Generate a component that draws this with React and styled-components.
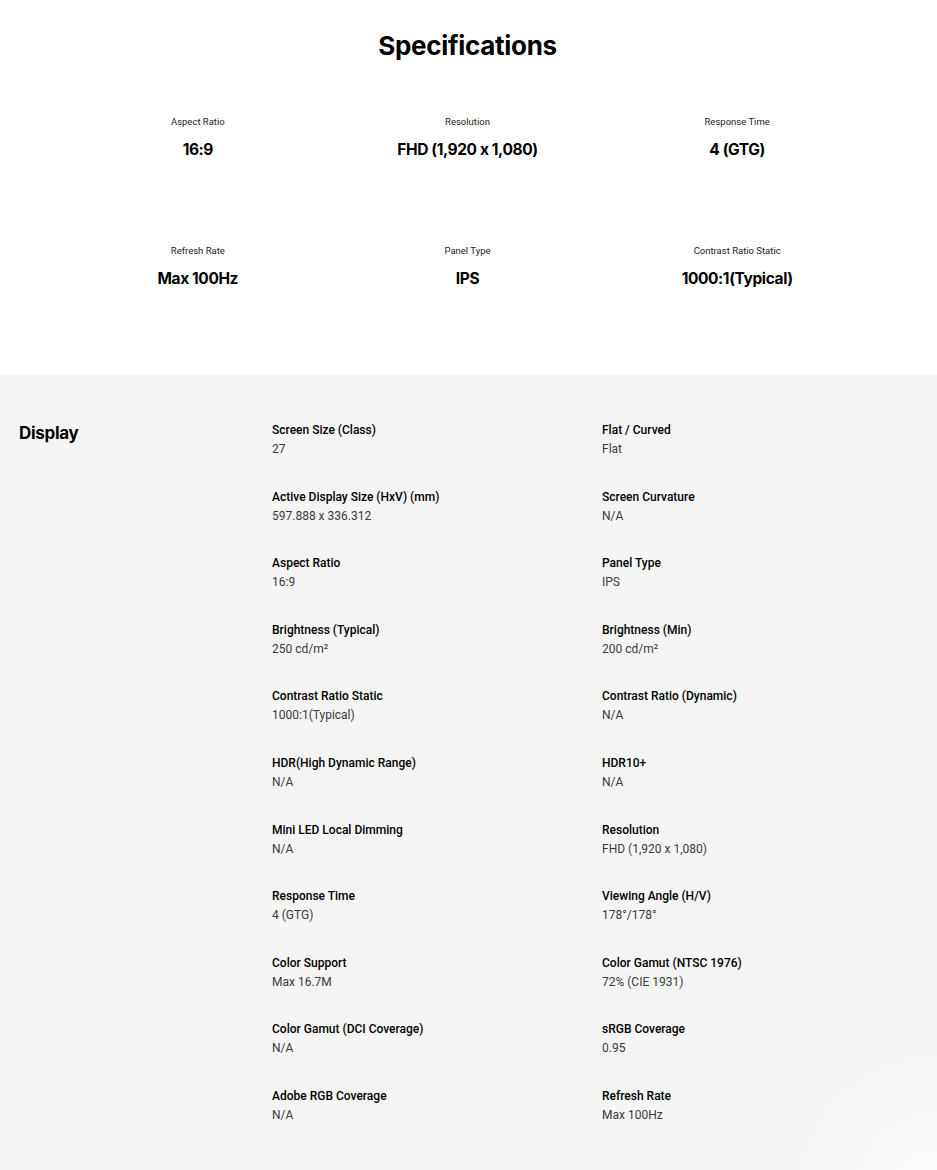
import React from "react";
import styled, { createGlobalStyle } from "styled-components";

const GlobalStyle = createGlobalStyle`
  html, body {
    margin: 0;
    padding: 0;
    background: #ffffff;
  }
  * {
    box-sizing: border-box;
  }
`;

const highlights = [
  { label: "Aspect Ratio", value: "16:9" },
  { label: "Resolution", value: "FHD (1,920 x 1,080)" },
  { label: "Response Time", value: "4 (GTG)" },
  { label: "Refresh Rate", value: "Max 100Hz" },
  { label: "Panel Type", value: "IPS" },
  { label: "Contrast Ratio Static", value: "1000:1(Typical)" },
];

const specs = [
  ["Screen Size (Class)", "27"],
  ["Flat / Curved", "Flat"],
  ["Active Display Size (HxV) (mm)", "597.888 x 336.312"],
  ["Screen Curvature", "N/A"],
  ["Aspect Ratio", "16:9"],
  ["Panel Type", "IPS"],
  ["Brightness (Typical)", "250 cd/m²"],
  ["Brightness (Min)", "200 cd/m²"],
  ["Contrast Ratio Static", "1000:1(Typical)"],
  ["Contrast Ratio (Dynamic)", "N/A"],
  ["HDR(High Dynamic Range)", "N/A"],
  ["HDR10+", "N/A"],
  ["Mini LED Local Dimming", "N/A"],
  ["Resolution", "FHD (1,920 x 1,080)"],
  ["Response Time", "4 (GTG)"],
  ["Viewing Angle (H/V)", "178°/178°"],
  ["Color Support", "Max 16.7M"],
  ["Color Gamut (NTSC 1976)", "72% (CIE 1931)"],
  ["Color Gamut (DCI Coverage)", "N/A"],
  ["sRGB Coverage", "0.95"],
  ["Adobe RGB Coverage", "N/A"],
  ["Refresh Rate", "Max 100Hz"],
];

const Page = styled.div`
  width: 937px;
  min-height: 1170px;
  display: flex;
  flex-direction: column;
  background: #ffffff;
`;

const Top = styled.section`
  padding: 30px 65px 0 63px;
  height: 375px;
`;

const Title = styled.h1`
  margin: 0;
  text-align: center;
  font-family: Inter, "Noto Sans", sans-serif;
  font-size: 26px;
  line-height: 32px;
  font-weight: 700;
  letter-spacing: -0.3px;
  color: #000000;
`;

const HighlightGrid = styled.div`
  margin-top: 53px;
  display: grid;
  grid-template-columns: repeat(3, 1fr);
  row-gap: 84px;
`;

const Highlight = styled.div`
  display: flex;
  flex-direction: column;
  align-items: center;
`;

const HighlightLabel = styled.span`
  font-family: Roboto, "Noto Sans", sans-serif;
  font-size: 9.5px;
  line-height: 14px;
  color: #222222;
`;

const HighlightValue = styled.span`
  margin-top: 11px;
  font-family: Inter, "Noto Sans", sans-serif;
  font-size: 15.5px;
  line-height: 20px;
  font-weight: 700;
  letter-spacing: -0.4px;
  color: #000000;
`;

const Details = styled.section`
  flex: 1;
  display: grid;
  grid-template-columns: 253px 1fr;
  align-items: start;
  padding: 46px 0 40px 19px;
  background:
    radial-gradient(circle at 100% 100%, rgba(255, 255, 255, 0.8), rgba(255, 255, 255, 0) 150px),
    #f5f5f5;
`;

const GroupTitle = styled.h2`
  margin: 1px 0 0;
  font-family: Inter, "Noto Sans", sans-serif;
  font-size: 17px;
  line-height: 22px;
  font-weight: 700;
  letter-spacing: -0.3px;
  color: #000000;
`;

const SpecGrid = styled.dl`
  margin: 0;
  display: grid;
  grid-template-columns: 330px 1fr;
  grid-auto-rows: 66.6px;
`;

const Spec = styled.div`
  display: flex;
  flex-direction: column;
`;

const SpecLabel = styled.dt`
  font-family: Roboto, "Noto Sans", sans-serif;
  font-size: 12px;
  line-height: 18px;
  font-weight: 500;
  color: #000000;
`;

const SpecValue = styled.dd`
  margin: 1px 0 0;
  font-family: Roboto, "Noto Sans", sans-serif;
  font-size: 12px;
  line-height: 18px;
  color: #3a3a3a;
`;

export default function App() {
  return (
    <Page>
      <GlobalStyle />
      <Top>
        <Title>Specifications</Title>
        <HighlightGrid>
          {highlights.map((h) => (
            <Highlight key={h.label}>
              <HighlightLabel>{h.label}</HighlightLabel>
              <HighlightValue>{h.value}</HighlightValue>
            </Highlight>
          ))}
        </HighlightGrid>
      </Top>
      <Details>
        <GroupTitle>Display</GroupTitle>
        <SpecGrid>
          {specs.map(([label, value]) => (
            <Spec key={label}>
              <SpecLabel>{label}</SpecLabel>
              <SpecValue>{value}</SpecValue>
            </Spec>
          ))}
        </SpecGrid>
      </Details>
    </Page>
  );
}
